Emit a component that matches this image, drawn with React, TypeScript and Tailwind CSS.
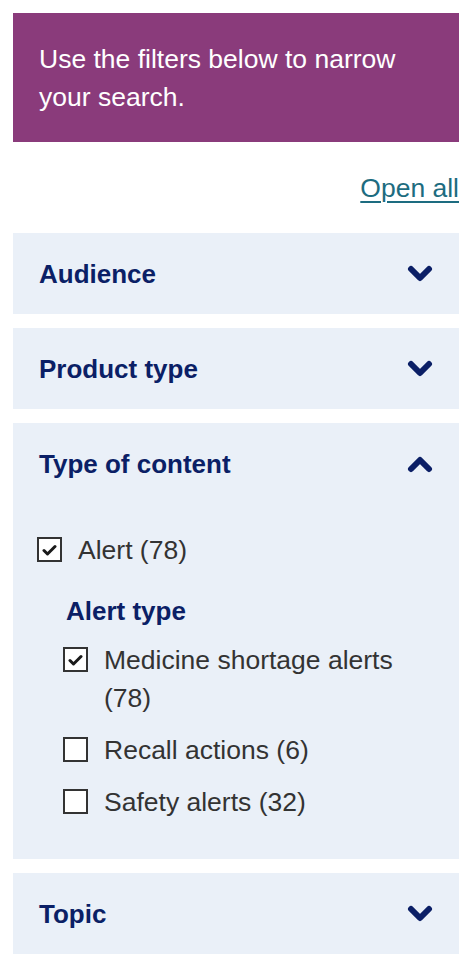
import { useState } from 'react';

const font = { fontFamily: '"Liberation Sans", Arial, sans-serif' };

function Chevron({ up }: { up?: boolean }) {
  return (
    <svg width="26" height="20" viewBox="0 0 26 20" className="shrink-0">
      <polyline
        points={up ? '4,15 13,6 22,15' : '4,5 13,14 22,5'}
        fill="none"
        stroke="#0b1f66"
        strokeWidth="6"
        strokeLinecap="round"
        strokeLinejoin="round"
      />
    </svg>
  );
}

function Box({ checked }: { checked?: boolean }) {
  return (
    <span className="w-[25px] h-[25px] shrink-0 border-2 border-[#333333] bg-white flex items-center justify-center">
      {checked && (
        <svg width="15" height="12" viewBox="0 0 15 12">
          <polyline
            points="2,6.5 5.5,10 13,2.5"
            fill="none"
            stroke="#1a1a1a"
            strokeWidth="3"
            strokeLinecap="round"
            strokeLinejoin="round"
          />
        </svg>
      )}
    </span>
  );
}

function Option({ label, checked, indent }: { label: string; checked?: boolean; indent?: boolean }) {
  return (
    <label className={`flex items-start gap-4 ${indent ? 'pl-[50px]' : 'pl-[24px]'} pr-6`}>
      <span className="mt-[6px]">
        <Box checked={checked} />
      </span>
      <span className="text-[26.5px] leading-[38px] text-[#333333]">{label}</span>
    </label>
  );
}

function Panel({ title, open, onToggle, children }: { title: string; open?: boolean; onToggle: () => void; children?: React.ReactNode }) {
  return (
    <div className="bg-[#eaf0f8]">
      <button
        onClick={onToggle}
        className="w-full h-[81px] px-[26px] flex items-center justify-between text-left"
      >
        <span className="text-[26px] leading-[38px] font-bold text-[#0b1f66]">{title}</span>
        <Chevron up={open} />
      </button>
      {open && children}
    </div>
  );
}

export default function App() {
  const [open, setOpen] = useState<Record<string, boolean>>({ 'Type of content': true });
  const toggle = (k: string) => setOpen((o) => ({ ...o, [k]: !o[k] }));

  return (
    <div className="min-h-screen bg-white pl-[13px] pr-[15px] pt-[13px] pb-4" style={font}>
      {/* intro box */}
      <div className="bg-[#8a3b7b] px-[26px] pt-[27px] pb-[26px]">
        <p className="text-[26.5px] leading-[38px] text-white">
          Use the filters below to narrow your search.
        </p>
      </div>

      <div className="flex justify-end mt-[27px] mb-[26px]">
        <a href="#" className="text-[26.5px] leading-[38px] text-[#1d6c80] underline underline-offset-[4px] decoration-2">
          Open all
        </a>
      </div>

      <div className="flex flex-col gap-[14px]">
        <Panel title="Audience" open={open['Audience']} onToggle={() => toggle('Audience')} />
        <Panel title="Product type" open={open['Product type']} onToggle={() => toggle('Product type')} />
        <Panel title="Type of content" open={open['Type of content']} onToggle={() => toggle('Type of content')}>
          <div className="pt-[27px] pb-[38px]">
            <Option label="Alert (78)" checked />
            <div className="pl-[53px] mt-[23px] text-[26px] leading-[38px] font-bold text-[#0b1f66]">Alert type</div>
            <div className="mt-[11px] flex flex-col gap-[14px]">
              <Option label="Medicine shortage alerts (78)" checked indent />
              <Option label="Recall actions (6)" indent />
              <Option label="Safety alerts (32)" indent />
            </div>
          </div>
        </Panel>
        <Panel title="Topic" open={open['Topic']} onToggle={() => toggle('Topic')} />
      </div>
    </div>
  );
}
